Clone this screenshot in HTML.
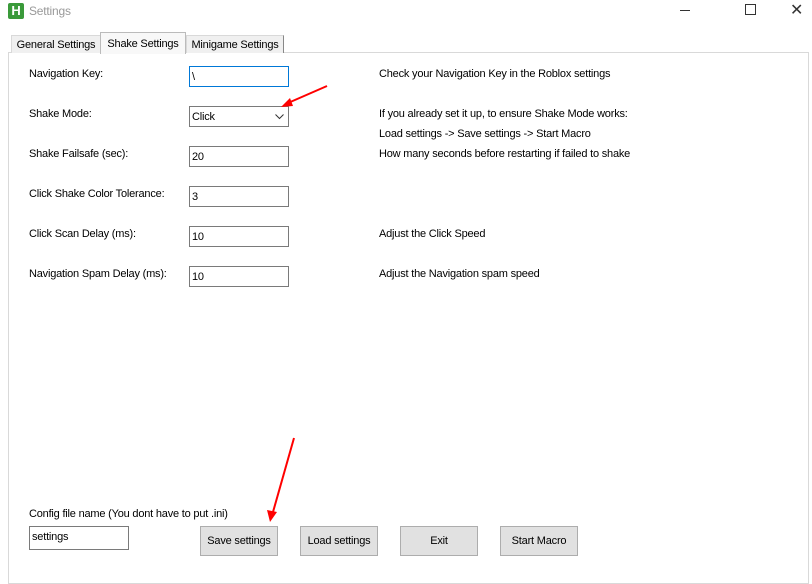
<!DOCTYPE html>
<html><head><style>
body{margin:0;width:812px;height:573px;background:#fff;font-family:"Liberation Sans",sans-serif;font-size:11px;letter-spacing:-0.2px;color:#000;position:relative;overflow:hidden}
.a{position:absolute;white-space:nowrap}
.t{margin-top:1px}
.in{position:absolute;width:98px;height:19px;border:1px solid #7a7a7a;background:#fff;box-sizing:content-box}
.in span{position:absolute;left:2px;top:4px}
.btn{position:absolute;width:76px;height:28px;background:#e1e1e1;border:1px solid #adadad;text-align:center;line-height:29px;white-space:nowrap}
.tab{position:absolute;background:#f0f0f0;border:1px solid #d9d9d9;border-bottom:none;text-align:center;white-space:nowrap}
</style></head><body>
<div class="a" style="left:8px;top:3px;width:16px;height:16px;background:#3a9a3a;border-radius:2px;color:#fff;font-weight:bold;font-size:13px;text-align:center;line-height:16px">H</div>
<div class="a" style="left:29px;top:4px;color:#999;font-size:12px">Settings</div>
<div class="a" style="left:680px;top:10px;width:10px;border-top:1px solid #333"></div>
<div class="a" style="left:745px;top:4px;width:9px;height:9px;border:1px solid #333"></div>
<div class="a" style="left:790px;top:0px;font-size:16px;color:#333">✕</div>
<div class="a" style="left:8px;top:52px;width:799px;height:530px;border:1px solid #d9d9d9;background:#fff"></div>
<div class="tab" style="left:11px;top:35px;width:88px;height:17px;line-height:18px">General Settings</div>
<div class="tab" style="left:100px;top:32px;width:84px;height:21px;line-height:22px;background:#f8f8f8;border-color:#bbb">Shake Settings</div>
<div class="tab" style="left:186px;top:35px;width:96px;height:17px;line-height:18px;border-right-color:#888">Minigame Settings</div>

<div class="a" style="left:29px;top:68px">Navigation Key:</div>
<div class="in" style="left:189px;top:66px;border-color:#0078d7"><span>\</span></div>
<div class="a" style="left:29px;top:108px">Shake Mode:</div>
<div class="in" style="left:189px;top:106px"><span>Click</span><svg style="position:absolute;left:85px;top:7px" width="9" height="6"><path d="M0.5 0.5L4.5 4.5L8.5 0.5" stroke="#333" fill="none"/></svg></div>
<div class="a" style="left:29px;top:148px">Shake Failsafe (sec):</div>
<div class="in" style="left:189px;top:146px"><span>20</span></div>
<div class="a" style="left:29px;top:188px">Click Shake Color Tolerance:</div>
<div class="in" style="left:189px;top:186px"><span>3</span></div>
<div class="a" style="left:29px;top:228px">Click Scan Delay (ms):</div>
<div class="in" style="left:189px;top:226px"><span>10</span></div>
<div class="a" style="left:29px;top:268px">Navigation Spam Delay (ms):</div>
<div class="in" style="left:189px;top:266px"><span>10</span></div>

<div class="a" style="left:379px;top:68px">Check your Navigation Key in the Roblox settings</div>
<div class="a" style="left:379px;top:108px">If you already set it up, to ensure Shake Mode works:</div>
<div class="a" style="left:379px;top:128px">Load settings -&gt; Save settings -&gt; Start Macro</div>
<div class="a" style="left:379px;top:148px">How many seconds before restarting if failed to shake</div>
<div class="a" style="left:379px;top:228px">Adjust the Click Speed</div>
<div class="a" style="left:379px;top:268px">Adjust the Navigation spam speed</div>

<div class="a" style="left:29px;top:508px">Config file name (You dont have to put .ini)</div>
<div class="in" style="left:29px;top:526px;height:22px"><span>settings</span></div>
<div class="btn" style="left:200px;top:526px">Save settings</div>
<div class="btn" style="left:300px;top:526px">Load settings</div>
<div class="btn" style="left:400px;top:526px">Exit</div>
<div class="btn" style="left:500px;top:526px">Start Macro</div>

<svg class="a" style="left:0;top:0" width="812" height="573">
<line x1="327" y1="86" x2="288" y2="103" stroke="#f00" stroke-width="2"/>
<polygon points="281,107 290,98 293,106" fill="#f00"/>
<line x1="294" y1="438" x2="273" y2="512" stroke="#f00" stroke-width="2"/>
<polygon points="270,522 267,510 277,512" fill="#f00"/>
</svg>
</body></html>
